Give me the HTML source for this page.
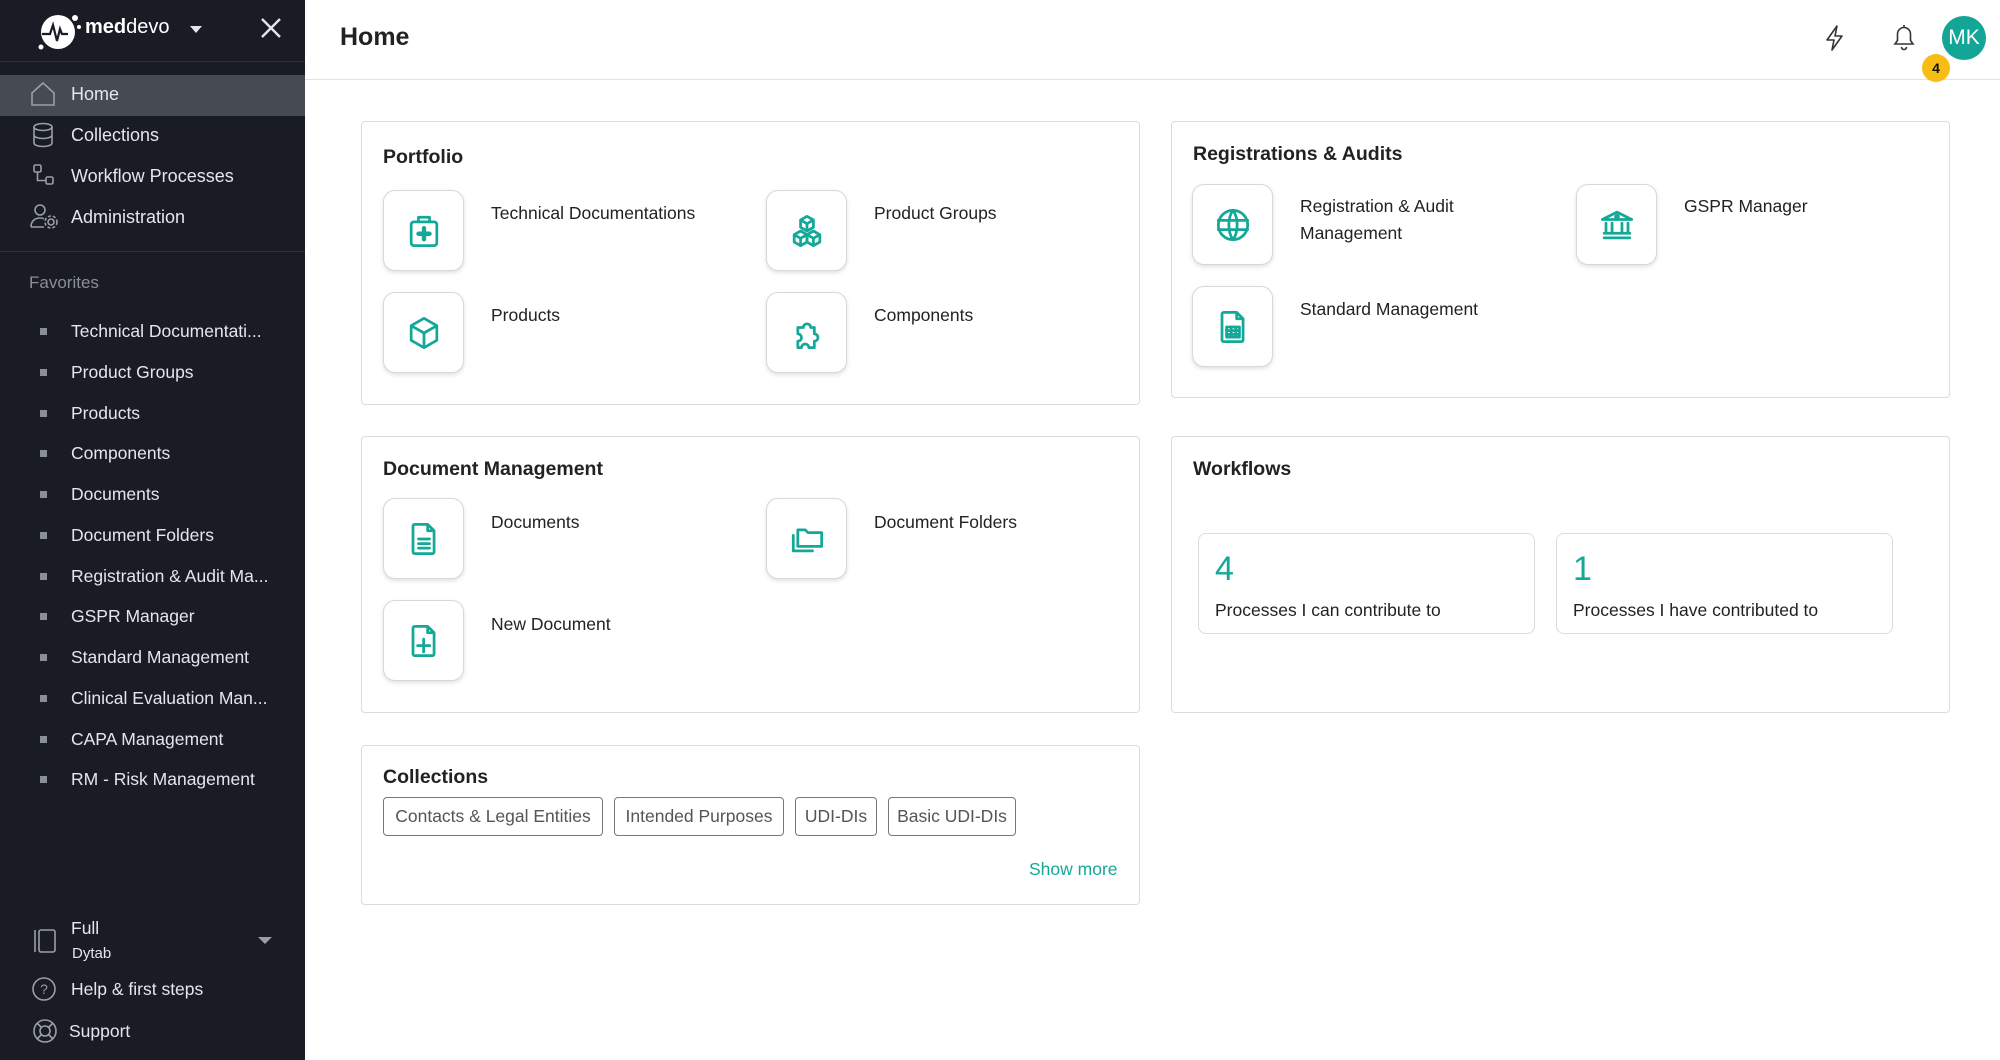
<!DOCTYPE html>
<html><head><meta charset="utf-8"><style>
*{box-sizing:border-box;margin:0;padding:0}
body{width:2000px;height:1060px;position:relative;font-family:"Liberation Sans",Arial,sans-serif;background:#fff;overflow:hidden;color:#222}
.a{position:absolute}
#sb{left:0;top:0;width:305px;height:1060px;background:#191c25;color:#e2e4e8}
.nav{position:absolute;left:71px;font-size:18px;color:#e4e6ea}
.fav{position:absolute;left:71px;font-size:17.5px;color:#e4e6ea}
.bul{position:absolute;left:40px;width:7px;height:7px;background:#8a8e96}
.ico{position:absolute;stroke:#9a9ea6;fill:none;stroke-width:1.6}
.card{position:absolute;border:1.5px solid #dcdcdc;border-radius:4px;background:#fff}
.ct{position:absolute;font-size:19.5px;font-weight:bold;color:#222}
.tile{position:absolute;width:81px;height:81px;border:1.5px solid #d8d8d8;border-radius:12px;background:#fff;box-shadow:0 2px 4px rgba(0,0,0,.12)}
.tile svg{position:absolute;left:18px;top:18px;width:44px;height:44px;fill:none;stroke:#14a898;stroke-width:1.5;stroke-linecap:round;stroke-linejoin:round}
.lb{position:absolute;font-size:17.5px;color:#222;line-height:27px}
.chip{position:absolute;top:797px;height:39px;border:1.5px solid #777;border-radius:4px;font-size:17.5px;color:#555;line-height:36px;text-align:center}
.wf{position:absolute;top:533px;width:337px;height:101px;border:1.5px solid #dcdcdc;border-radius:8px}
.wf .n{position:absolute;left:16px;top:16px;font-size:34px;color:#14a898}
.wf .t{position:absolute;left:16px;top:66px;font-size:17.5px;color:#222}
</style></head><body>
<div id="sb" class="a">
 <svg class="a" style="left:36px;top:10px" width="48" height="42" viewBox="0 0 48 42"><circle cx="22" cy="22" r="17" fill="#fff"/><path d="M6 24h8l3-9 4 16 3-12 2 5h6" stroke="#191c25" stroke-width="2.2" fill="none"/><circle cx="39" cy="8" r="3" fill="#fff"/><circle cx="43" cy="17" r="2" fill="#fff"/><circle cx="5" cy="37" r="2.5" fill="#fff"/></svg>
 <div class="a" style="left:85px;top:16px;font-size:20px;color:#fff"><b>med</b>devo</div>
 <div class="a" style="left:190px;top:26px;width:0;height:0;border-left:6px solid transparent;border-right:6px solid transparent;border-top:7px solid #e4e6ea"></div>
 <svg class="a" style="left:260px;top:17px" width="22" height="22" viewBox="0 0 22 22"><path d="M2 2l18 18M20 2L2 20" stroke="#e4e6ea" stroke-width="2.4"/></svg>
 <div class="a" style="left:0;top:61px;width:305px;height:1px;background:#2c3039"></div>
 <div class="a" style="left:0;top:75px;width:305px;height:41px;background:#464a52"></div>
 <svg class="ico" style="left:29px;top:81px" width="28" height="26" viewBox="0 0 28 26"><path d="M3 12L14 2l11 10v12H3z"/></svg>
 <div class="nav" style="top:84px">Home</div>
 <svg class="ico" style="left:31px;top:122px" width="24" height="26" viewBox="0 0 24 26"><ellipse cx="12" cy="5" rx="9" ry="3.5"/><path d="M3 5v16c0 2 4 3.5 9 3.5s9-1.5 9-3.5V5M3 13c0 2 4 3.5 9 3.5s9-1.5 9-3.5"/></svg>
 <div class="nav" style="top:125px">Collections</div>
 <svg class="ico" style="left:32px;top:163px" width="24" height="24" viewBox="0 0 24 24"><rect x="2" y="2" width="7" height="7" rx="1.5"/><rect x="14" y="14" width="7" height="7" rx="1.5"/><path d="M5.5 9v8.5H14"/></svg>
 <div class="nav" style="top:166px">Workflow Processes</div>
 <svg class="ico" style="left:29px;top:203px" width="30" height="26" viewBox="0 0 30 26"><circle cx="11" cy="7" r="5"/><path d="M2 24c0-6 4-9 9-9 2 0 3 .3 4 .8M2 24h13"/><circle cx="22" cy="19" r="3"/><circle cx="22" cy="19" r="6" stroke-dasharray="3 2"/></svg>
 <div class="nav" style="top:207px">Administration</div>
 <div class="a" style="left:0;top:251px;width:305px;height:1px;background:#2c3039"></div>
 <div class="a" style="left:29px;top:273px;font-size:17px;color:#8a8e96">Favorites</div>
 <div class="bul" style="top:328px"></div><div class="fav" style="top:321px">Technical Documentati...</div>
 <div class="bul" style="top:369px"></div><div class="fav" style="top:362px">Product Groups</div>
 <div class="bul" style="top:410px"></div><div class="fav" style="top:403px">Products</div>
 <div class="bul" style="top:450px"></div><div class="fav" style="top:443px">Components</div>
 <div class="bul" style="top:491px"></div><div class="fav" style="top:484px">Documents</div>
 <div class="bul" style="top:532px"></div><div class="fav" style="top:525px">Document Folders</div>
 <div class="bul" style="top:573px"></div><div class="fav" style="top:566px">Registration &amp; Audit Ma...</div>
 <div class="bul" style="top:613px"></div><div class="fav" style="top:606px">GSPR Manager</div>
 <div class="bul" style="top:654px"></div><div class="fav" style="top:647px">Standard Management</div>
 <div class="bul" style="top:695px"></div><div class="fav" style="top:688px">Clinical Evaluation Man...</div>
 <div class="bul" style="top:736px"></div><div class="fav" style="top:729px">CAPA Management</div>
 <div class="bul" style="top:776px"></div><div class="fav" style="top:769px">RM - Risk Management</div>
 <svg class="ico" style="left:33px;top:928px" width="26" height="26" viewBox="0 0 26 26"><path d="M2 2v22"/><rect x="6" y="2" width="16" height="22" rx="2"/></svg>
 <div class="fav" style="top:918px">Full</div>
 <div class="a" style="left:72px;top:945px;font-size:15px;color:#e4e6ea">Dytab</div>
 <div class="a" style="left:258px;top:937px;width:0;height:0;border-left:7px solid transparent;border-right:7px solid transparent;border-top:7px solid #9a9ea6"></div>
 <svg class="ico" style="left:31px;top:976px" width="26" height="26" viewBox="0 0 26 26"><circle cx="13" cy="13" r="11"/><text x="13" y="18" text-anchor="middle" font-size="14" fill="#9a9ea6" stroke="none" font-family="Liberation Sans">?</text></svg>
 <div class="fav" style="top:979px">Help &amp; first steps</div>
 <svg class="ico" style="left:32px;top:1018px" width="26" height="26" viewBox="0 0 26 26"><circle cx="13" cy="13" r="11"/><circle cx="13" cy="13" r="5"/><path d="M5 5l4.5 4.5M21 5l-4.5 4.5M5 21l4.5-4.5M21 21l-4.5-4.5"/></svg>
 <div class="fav" style="top:1021px;left:69px">Support</div>
</div>

<div class="a" style="left:340px;top:23px;font-size:25px;font-weight:bold;color:#222">Home</div>
<div class="a" style="left:305px;top:79px;width:1695px;height:1px;background:#e2e2e2"></div>
<svg class="a" style="left:1822px;top:24px" width="26" height="28" viewBox="0 0 26 28"><path d="M15 2L5 16h7l-2 10 10-14h-7z" fill="none" stroke="#333" stroke-width="1.6" stroke-linejoin="round"/></svg>
<svg class="a" style="left:1890px;top:22px" width="28" height="30" viewBox="0 0 28 30"><path d="M5 22h18l-2.5-3.5V12a6.5 6.5 0 0 0-13 0v6.5z M11.5 25a2.5 2.5 0 0 0 5 0" fill="none" stroke="#333" stroke-width="1.6"/><path d="M14 3v2.5" stroke="#333" stroke-width="1.6"/></svg>
<div class="a" style="left:1942px;top:16px;width:44px;height:44px;border-radius:50%;background:#13a595;color:#fff;font-size:21px;line-height:44px;text-align:center">MK</div>
<div class="a" style="left:1922px;top:54px;width:28px;height:28px;border-radius:50%;background:#f7bd14;color:#111;font-size:14px;font-weight:bold;line-height:28px;text-align:center">4</div>

<!-- Portfolio -->
<div class="card" style="left:361px;top:121px;width:779px;height:284px"></div>
<div class="ct" style="left:383px;top:146px">Portfolio</div>
<div class="tile" style="left:383px;top:190px"><svg viewBox="0 0 24 24"><rect x="5" y="7" width="14" height="13" rx="1.5"/><path d="M9 7V4.5h6V7"/><path d="M12 10.5v6M9 13.5h6" stroke-width="2.4"/></svg></div>
<div class="lb" style="left:491px;top:200px">Technical Documentations</div>
<div class="tile" style="left:766px;top:190px"><svg viewBox="0 0 24 24"><path d="M12 4l3.5 2v4L12 12 8.5 10V6z M8.5 6L12 8l3.5-2M12 8v4"/><path d="M8.5 12L12 14v4l-3.5 2L5 18v-4z M5 14l3.5 2 3.5-2M8.5 16v4"/><path d="M15.5 12L19 14v4l-3.5 2L12 18v-4z M12 14l3.5 2 3.5-2M15.5 16v4"/></svg></div>
<div class="lb" style="left:874px;top:200px">Product Groups</div>
<div class="tile" style="left:383px;top:292px"><svg viewBox="0 0 24 24"><path d="M12 4l7 4v8l-7 4-7-4V8z M5 8l7 4 7-4M12 12v8"/></svg></div>
<div class="lb" style="left:491px;top:302px">Products</div>
<div class="tile" style="left:766px;top:292px"><svg viewBox="0 0 24 24"><path d="M7 9h3a2 2 0 1 1 4 0h2v3.5a2 2 0 1 1 0 4V20h-3a2 2 0 1 0-4 0H7v-3.5a2 2 0 1 0 0-4z M10 4.5"/></svg></div>
<div class="lb" style="left:874px;top:302px">Components</div>

<!-- Registrations -->
<div class="card" style="left:1171px;top:121px;width:779px;height:277px"></div>
<div class="ct" style="left:1193px;top:143px">Registrations &amp; Audits</div>
<div class="tile" style="left:1192px;top:184px"><svg viewBox="0 0 24 24"><circle cx="12" cy="12" r="8"/><path d="M4 9.5h16M4 14.5h16M12 4c-3 4-3 12 0 16M12 4c3 4 3 12 0 16"/></svg></div>
<div class="lb" style="left:1300px;top:193px">Registration &amp; Audit<br>Management</div>
<div class="tile" style="left:1576px;top:184px"><svg viewBox="0 0 24 24"><path d="M4 9L12 5l8 4z M6 16V11M9.3 16V11M14.7 16V11M18 16V11M5 16.5h14M5 19h14"/><circle cx="12" cy="7.5" r=".8"/></svg></div>
<div class="lb" style="left:1684px;top:193px">GSPR Manager</div>
<div class="tile" style="left:1192px;top:286px"><svg viewBox="0 0 24 24"><path d="M7 4h7l3.5 3.5V19a1 1 0 0 1-1 1H7a1 1 0 0 1-1-1V5a1 1 0 0 1 1-1z M14 4v3.5h3.5"/><rect x="8.5" y="12" width="7" height="5.5"/><path d="M8.5 14h7M8.5 16h7M11 12v5.5M13.5 12v5.5"/></svg></div>
<div class="lb" style="left:1300px;top:296px">Standard Management</div>

<!-- Document Mgmt -->
<div class="card" style="left:361px;top:436px;width:779px;height:277px"></div>
<div class="ct" style="left:383px;top:458px">Document Management</div>
<div class="tile" style="left:383px;top:498px"><svg viewBox="0 0 24 24"><path d="M7 4h7l3.5 3.5V19a1 1 0 0 1-1 1H7a1 1 0 0 1-1-1V5a1 1 0 0 1 1-1z M14 4v3.5h3.5 M9 12h6M9 14.5h6M9 17h6"/></svg></div>
<div class="lb" style="left:491px;top:509px">Documents</div>
<div class="tile" style="left:766px;top:498px"><svg viewBox="0 0 24 24"><path d="M7 7h4l1.5 1.5H20V16H7z M4.5 10v8.5H15"/></svg></div>
<div class="lb" style="left:874px;top:509px">Document Folders</div>
<div class="tile" style="left:383px;top:600px"><svg viewBox="0 0 24 24"><path d="M7 4h7l3.5 3.5V19a1 1 0 0 1-1 1H7a1 1 0 0 1-1-1V5a1 1 0 0 1 1-1z M14 4v3.5h3.5 M11.8 11v7M8.5 14.5h6.6"/></svg></div>
<div class="lb" style="left:491px;top:611px">New Document</div>

<!-- Workflows -->
<div class="card" style="left:1171px;top:436px;width:779px;height:277px"></div>
<div class="ct" style="left:1193px;top:458px">Workflows</div>
<div class="wf" style="left:1198px"><div class="n">4</div><div class="t">Processes I can contribute to</div></div>
<div class="wf" style="left:1556px"><div class="n">1</div><div class="t">Processes I have contributed to</div></div>

<!-- Collections -->
<div class="card" style="left:361px;top:745px;width:779px;height:160px"></div>
<div class="ct" style="left:383px;top:766px">Collections</div>
<div class="chip" style="left:383px;width:220px">Contacts &amp; Legal Entities</div>
<div class="chip" style="left:614px;width:170px">Intended Purposes</div>
<div class="chip" style="left:795px;width:82px">UDI-DIs</div>
<div class="chip" style="left:888px;width:128px">Basic UDI-DIs</div>
<div class="a" style="left:1029px;top:859px;font-size:17.5px;color:#14a898">Show more</div>
</body></html>
